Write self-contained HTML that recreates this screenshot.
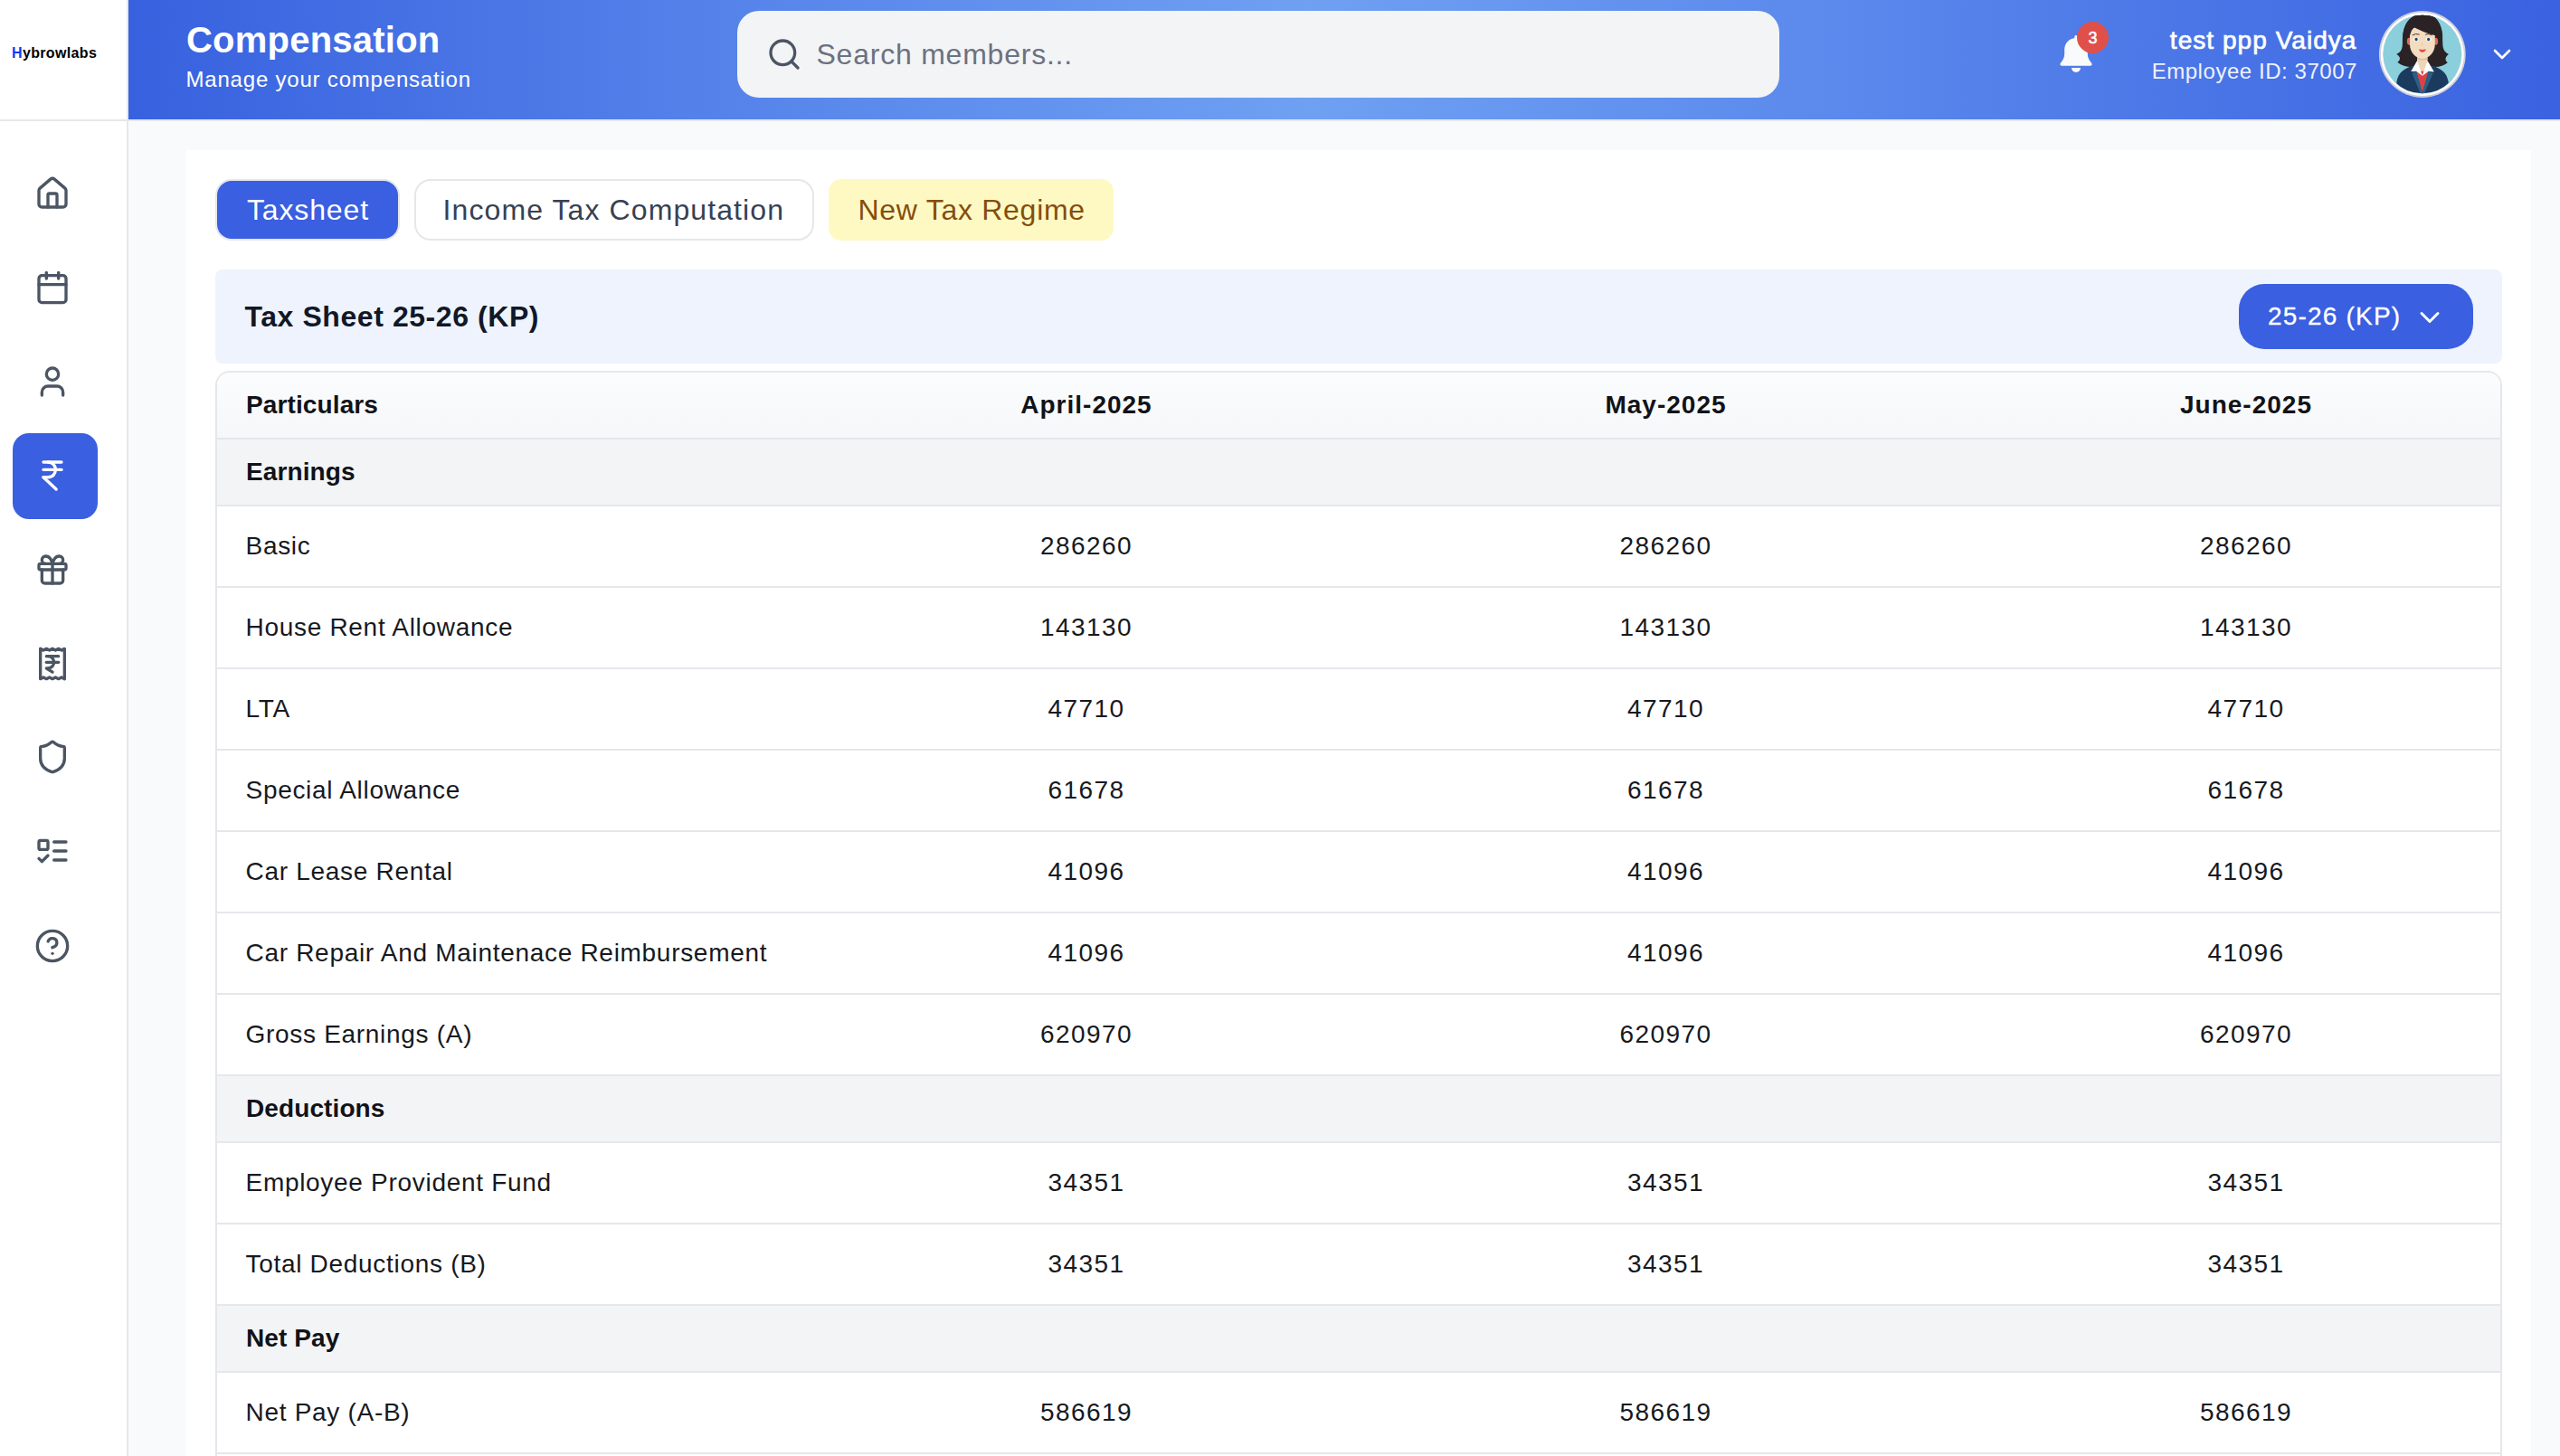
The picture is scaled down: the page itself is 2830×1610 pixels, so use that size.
<!DOCTYPE html>
<html><head><meta charset="utf-8">
<style>
*{box-sizing:border-box;margin:0;padding:0}
html,body{width:2830px;height:1610px;overflow:hidden;background:#f9fafb;font-family:"Liberation Sans",sans-serif;color:#111827}
.abs{position:absolute}
.t{position:absolute;white-space:nowrap}
</style></head><body>

<div class="abs" style="left:0;top:0;width:142px;height:1610px;background:#fff;border-right:2px solid #e5e7eb"></div>
<div class="abs" style="left:0;top:132px;width:142px;height:2px;background:#e5e7eb"></div>
<div class="t" style="left:13px;top:51.2px;font-size:16px;line-height:16px;font-weight:700;letter-spacing:0.35px;color:#000"><span style="color:#1a35f5">H</span>ybrowlabs</div>
<div class="abs" style="left:14px;top:479px;width:94px;height:95px;border-radius:18px;background:#3a5fe0"></div>
<svg class="abs" style="left:38px;top:194px" width="40" height="40" viewBox="0 0 24 24" fill="none" stroke="#4b5563" stroke-width="2" stroke-linecap="round" stroke-linejoin="round"><path d="M15 21v-8a1 1 0 0 0-1-1h-4a1 1 0 0 0-1 1v8"/><path d="M3 10a2 2 0 0 1 .709-1.528l7-5.999a2 2 0 0 1 2.582 0l7 5.999A2 2 0 0 1 21 10v9a2 2 0 0 1-2 2H5a2 2 0 0 1-2-2z"/></svg>
<svg class="abs" style="left:38px;top:298px" width="40" height="40" viewBox="0 0 24 24" fill="none" stroke="#4b5563" stroke-width="2" stroke-linecap="round" stroke-linejoin="round"><path d="M8 2v4"/><path d="M16 2v4"/><rect width="18" height="18" x="3" y="4" rx="2"/><path d="M3 10h18"/></svg>
<svg class="abs" style="left:38px;top:402px" width="40" height="40" viewBox="0 0 24 24" fill="none" stroke="#4b5563" stroke-width="2" stroke-linecap="round" stroke-linejoin="round"><path d="M19 21v-2a4 4 0 0 0-4-4H9a4 4 0 0 0-4 4v2"/><circle cx="12" cy="7" r="4"/></svg>
<svg class="abs" style="left:38px;top:506px" width="40" height="40" viewBox="0 0 24 24" fill="none" stroke="#ffffff" stroke-width="2" stroke-linecap="round" stroke-linejoin="round"><path d="M6 3h12"/><path d="M6 8h12"/><path d="m6 13 8.5 8"/><path d="M6 13h3"/><path d="M9 13c6.667 0 6.667-10 0-10"/></svg>
<svg class="abs" style="left:38px;top:610px" width="40" height="40" viewBox="0 0 24 24" fill="none" stroke="#4b5563" stroke-width="2" stroke-linecap="round" stroke-linejoin="round"><rect x="3" y="8" width="18" height="4" rx="1"/><path d="M12 8v13"/><path d="M19 12v7a2 2 0 0 1-2 2H7a2 2 0 0 1-2-2v-7"/><path d="M7.5 8a2.5 2.5 0 0 1 0-5A4.8 8 0 0 1 12 8a4.8 8 0 0 1 4.5-5 2.5 2.5 0 0 1 0 5"/></svg>
<svg class="abs" style="left:38px;top:714px" width="40" height="40" viewBox="0 0 24 24" fill="none" stroke="#4b5563" stroke-width="2" stroke-linecap="round" stroke-linejoin="round"><path d="M4 2v20l2-1 2 1 2-1 2 1 2-1 2 1 2-1 2 1V2l-2 1-2-1-2 1-2-1-2 1-2-1-2 1Z"/><path d="M8 7h8"/><path d="M12 17.5 8 15h1a4 4 0 0 0 0-8"/><path d="M8 11h8"/></svg>
<svg class="abs" style="left:38px;top:817px" width="40" height="40" viewBox="0 0 24 24" fill="none" stroke="#4b5563" stroke-width="2" stroke-linecap="round" stroke-linejoin="round"><path d="M20 13c0 5-3.5 7.5-7.66 8.95a1 1 0 0 1-.67-.01C7.5 20.5 4 18 4 13V6a1 1 0 0 1 1-1c2 0 4.5-1.2 6.24-2.72a1.17 1.17 0 0 1 1.52 0C14.51 3.81 17 5 19 5a1 1 0 0 1 1 1z"/></svg>
<svg class="abs" style="left:38px;top:921px" width="40" height="40" viewBox="0 0 24 24" fill="none" stroke="#4b5563" stroke-width="2" stroke-linecap="round" stroke-linejoin="round"><rect x="3" y="5" width="6" height="6" rx="1"/><path d="m3 17 2 2 4-4"/><path d="M13 6h8"/><path d="M13 12h8"/><path d="M13 18h8"/></svg>
<svg class="abs" style="left:38px;top:1026px" width="40" height="40" viewBox="0 0 24 24" fill="none" stroke="#4b5563" stroke-width="2" stroke-linecap="round" stroke-linejoin="round"><circle cx="12" cy="12" r="10"/><path d="M9.09 9a3 3 0 0 1 5.83 1c0 2-3 3-3 3"/><path d="M12 17h.01"/></svg>
<div class="abs" style="left:142px;top:0;width:2688px;height:132px;background:linear-gradient(90deg,#3861df 0%,#5886eb 27%,#6fa0f2 48.5%,#5a88ec 71%,#3a62e1 100%)"></div>
<div class="abs" style="left:142px;top:132px;width:2688px;height:2px;background:#e5e7eb"></div>
<div class="t" style="left:206px;top:24.2px;font-size:40px;line-height:40px;font-weight:700;letter-spacing:0.22px;color:#fff">Compensation</div>
<div class="t" style="left:205.5px;top:75.6px;font-size:24px;line-height:24px;letter-spacing:0.8px;color:#fff">Manage your compensation</div>
<div class="abs" style="left:815px;top:12px;width:1152px;height:96px;border-radius:24px;background:#f3f4f6"></div>
<svg class="abs" style="left:846.7px;top:39.7px" width="40" height="40" viewBox="0 0 24 24" fill="none" stroke="#4b5563" stroke-width="2" stroke-linecap="round" stroke-linejoin="round"><circle cx="11" cy="11" r="8"/><path d="m21 21-4.3-4.3"/></svg>
<div class="t" style="left:902.5px;top:44.3px;font-size:32px;line-height:32px;letter-spacing:0.77px;color:#6b7280">Search members...</div>
<svg class="abs" style="left:2277px;top:39px" width="36" height="42" viewBox="0 0 36 42"><g fill="#f9fafb"><rect x="16.3" y="0" width="3.4" height="5" rx="1.7"/><path d="M18 3C11 3 5.2 8 5.2 16.5L5.2 21C5.2 25 3.2 28 1 30.6C-0.1 31.9 0.5 33.8 2.2 33.8L33.8 33.8C35.5 33.8 36.1 31.9 35 30.6C32.8 28 30.8 25 30.8 21L30.8 16.5C30.8 8 25 3 18 3Z"/><path d="M13 36H23A5 5 0 0 1 13 36Z"/></g></svg>
<div class="abs" style="left:2296px;top:24px;width:35px;height:35px;border-radius:50%;background:#e0504a"></div>
<div class="t" style="left:2296px;width:35px;text-align:center;top:32.9px;font-size:18px;line-height:18px;-webkit-text-stroke:0.5px #fff;color:#fff">3</div>
<div class="t" style="right:224.5px;top:30.5px;font-size:28px;line-height:28px;letter-spacing:1.05px;-webkit-text-stroke:0.7px #fff;color:#fff">test ppp Vaidya</div>
<div class="t" style="right:224px;top:67.1px;font-size:24px;line-height:24px;letter-spacing:0.55px;color:#eef2fd">Employee ID: 37007</div>
<svg class="abs" style="left:2620px;top:5px" width="120" height="110" viewBox="0 0 1588 1456"><defs><clipPath id="av"><circle cx="765" cy="728" r="572"/></clipPath></defs>
<circle cx="765" cy="728" r="634" fill="#cdd0da"/>
<circle cx="765" cy="728" r="608" fill="#ffffff"/>
<circle cx="765" cy="728" r="580" fill="#dfe3ea"/>
<circle cx="765" cy="728" r="574" fill="#8bcfdc"/>
<g clip-path="url(#av)">
<path d="M790 132C690 132 600 175 545 255C490 335 475 430 475 540C475 640 470 690 385 728C450 760 450 810 400 845C470 905 560 925 650 905L890 905C980 925 1070 905 1135 850C1090 815 1095 770 1150 728C1075 690 1062 640 1062 540C1062 420 1045 320 995 245C945 170 880 132 790 132Z" fill="#2a2225"/>
<path d="M385 1200C385 1020 470 960 600 905L935 905C1065 960 1150 1020 1150 1200L1150 1460L385 1460Z" fill="#1a3a5e"/>
<path d="M495 1130L510 1460L490 1460Z" fill="#0f2a48"/>
<path d="M1035 1130L1025 1460L1045 1460Z" fill="#0f2a48"/>
<path d="M690 740L840 740L845 1010L685 1010Z" fill="#efd6b8"/>
<path d="M690 770Q765 810 840 770L840 800Q765 830 690 800Z" fill="#dcbd9c"/>
<ellipse cx="572" cy="540" rx="32" ry="52" fill="#df6b5c"/>
<ellipse cx="962" cy="540" rx="32" ry="52" fill="#df6b5c"/>
<path d="M582 430C582 360 640 325 765 325C890 325 950 360 950 430L950 580C950 705 860 792 765 792C670 792 582 705 582 580Z" fill="#f3dcc0"/>
<path d="M478 470L588 445C596 395 615 358 650 335C740 385 860 440 1000 462L1062 470C1062 420 1045 320 995 245C945 170 880 132 790 132C690 132 600 175 545 255C505 315 485 390 478 470Z" fill="#2a2225"/>
<path d="M622 447Q668 418 718 437" stroke="#3a2a26" stroke-width="12" fill="none" stroke-linecap="round"/>
<path d="M812 437Q858 420 902 447" stroke="#3a2a26" stroke-width="12" fill="none" stroke-linecap="round"/>
<ellipse cx="672" cy="508" rx="38" ry="26" fill="#ffffff"/><circle cx="676" cy="510" r="22" fill="#22476f"/>
<ellipse cx="860" cy="508" rx="38" ry="26" fill="#ffffff"/><circle cx="856" cy="510" r="22" fill="#22476f"/>
<path d="M765 560Q755 600 768 612" stroke="#e2c3a3" stroke-width="10" fill="none"/>
<path d="M712 660Q740 652 765 662Q790 652 822 660Q800 700 765 700Q732 700 712 660Z" fill="#e24a48"/>
<path d="M675 975L855 975L765 1310Z" fill="#d84445"/>
<path d="M598 980L688 825L768 1045L676 975Z" fill="#ffffff"/>
<path d="M938 985L842 825L762 1045L856 975Z" fill="#ffffff"/>
<path d="M612 1000L676 975L770 1300L735 1300Z" fill="#2b5f88"/>
<path d="M922 1005L856 975L760 1300L795 1300Z" fill="#2b5f88"/>
</g>
</svg>
<svg class="abs" style="left:2750px;top:43.9px" width="32" height="32" viewBox="0 0 24 24" fill="none" stroke="#ffffff" stroke-width="2" stroke-linecap="round" stroke-linejoin="round"><path d="m6 9 6 6 6-6"/></svg>
<div class="abs" style="left:206px;top:166px;width:2592px;height:1444px;background:#fff"></div>
<div class="abs" style="left:238px;top:198px;width:204px;height:68px;border:2px solid #e5e7eb;border-radius:18px;background:#3a5fe0"></div>
<div class="t" style="left:273px;top:216.1px;font-size:32px;line-height:32px;letter-spacing:0.85px;color:#fff">Taxsheet</div>
<div class="abs" style="left:458px;top:198px;width:442px;height:68px;border:2px solid #e5e7eb;border-radius:18px;background:#fff"></div>
<div class="t" style="left:489.5px;top:216.1px;font-size:32px;line-height:32px;letter-spacing:1.1px;color:#374151">Income Tax Computation</div>
<div class="abs" style="left:916px;top:198px;width:315px;height:68px;border-radius:14px;background:#fef9c3"></div>
<div class="t" style="left:948.5px;top:216.1px;font-size:32px;line-height:32px;letter-spacing:0.72px;color:#854d0e">New Tax Regime</div>
<div class="abs" style="left:238px;top:298px;width:2528px;height:104px;border-radius:8px;background:#eef3fd"></div>
<div class="t" style="left:270.5px;top:333.9px;font-size:32px;line-height:32px;font-weight:700;letter-spacing:0.57px;color:#111827">Tax Sheet 25-26 (KP)</div>
<div class="abs" style="left:2475px;top:314px;width:259px;height:72px;border-radius:28px;background:#3a5fe0"></div>
<div class="t" style="left:2507px;top:336.0px;font-size:28px;line-height:28px;letter-spacing:1.2px;-webkit-text-stroke:0.3px #fff;color:#fff">25-26 (KP)</div>
<svg class="abs" style="left:2668.3px;top:332.8px" width="36" height="36" viewBox="0 0 24 24" fill="none" stroke="#ffffff" stroke-width="2" stroke-linecap="round" stroke-linejoin="round"><path d="m6 9 6 6 6-6"/></svg>
<div class="abs" style="left:238px;top:410px;width:2528px;height:1300px;border:2px solid #e5e7eb;border-radius:16px;overflow:hidden;background:#fff">
<div class="abs" style="left:0px;top:0px;width:2526px;height:72px;background:linear-gradient(180deg,#fbfcfd,#f6f7f9)"></div>
<div class="t" style="left:32px;top:0px;height:72px;font-size:28px;line-height:72px;font-weight:700;letter-spacing:0.12px;color:#111318">Particulars</div>
<div class="t" style="left:661px;width:600px;text-align:center;top:0px;height:72px;font-size:28px;line-height:72px;font-weight:700;letter-spacing:1.0px;color:#111318">April-2025</div>
<div class="t" style="left:1301.5px;width:600px;text-align:center;top:0px;height:72px;font-size:28px;line-height:72px;font-weight:700;letter-spacing:1.0px;color:#111318">May-2025</div>
<div class="t" style="left:1943px;width:600px;text-align:center;top:0px;height:72px;font-size:28px;line-height:72px;font-weight:700;letter-spacing:1.0px;color:#111318">June-2025</div>
<div class="abs" style="left:0px;top:72px;width:2526px;height:2px;background:#e5e7eb"></div>
<div class="abs" style="left:0px;top:74px;width:2526px;height:72px;background:#f3f4f6"></div>
<div class="t" style="left:32px;top:74px;height:72px;font-size:28px;line-height:72px;font-weight:700;letter-spacing:0.1px;color:#111318">Earnings</div>
<div class="abs" style="left:0px;top:146px;width:2526px;height:2px;background:#e5e7eb"></div>
<div class="t" style="left:31.5px;top:148px;height:88px;font-size:28px;line-height:88px;font-weight:400;letter-spacing:0.7px;color:#17191e">Basic</div>
<div class="t" style="left:661px;width:600px;text-align:center;top:148px;height:88px;font-size:28px;line-height:88px;font-weight:400;letter-spacing:1.45px;color:#17191e">286260</div>
<div class="t" style="left:1301.5px;width:600px;text-align:center;top:148px;height:88px;font-size:28px;line-height:88px;font-weight:400;letter-spacing:1.45px;color:#17191e">286260</div>
<div class="t" style="left:1943px;width:600px;text-align:center;top:148px;height:88px;font-size:28px;line-height:88px;font-weight:400;letter-spacing:1.45px;color:#17191e">286260</div>
<div class="abs" style="left:0px;top:236px;width:2526px;height:2px;background:#e5e7eb"></div>
<div class="t" style="left:31.5px;top:238px;height:88px;font-size:28px;line-height:88px;font-weight:400;letter-spacing:0.7px;color:#17191e">House Rent Allowance</div>
<div class="t" style="left:661px;width:600px;text-align:center;top:238px;height:88px;font-size:28px;line-height:88px;font-weight:400;letter-spacing:1.45px;color:#17191e">143130</div>
<div class="t" style="left:1301.5px;width:600px;text-align:center;top:238px;height:88px;font-size:28px;line-height:88px;font-weight:400;letter-spacing:1.45px;color:#17191e">143130</div>
<div class="t" style="left:1943px;width:600px;text-align:center;top:238px;height:88px;font-size:28px;line-height:88px;font-weight:400;letter-spacing:1.45px;color:#17191e">143130</div>
<div class="abs" style="left:0px;top:326px;width:2526px;height:2px;background:#e5e7eb"></div>
<div class="t" style="left:31.5px;top:328px;height:88px;font-size:28px;line-height:88px;font-weight:400;letter-spacing:0.7px;color:#17191e">LTA</div>
<div class="t" style="left:661px;width:600px;text-align:center;top:328px;height:88px;font-size:28px;line-height:88px;font-weight:400;letter-spacing:1.45px;color:#17191e">47710</div>
<div class="t" style="left:1301.5px;width:600px;text-align:center;top:328px;height:88px;font-size:28px;line-height:88px;font-weight:400;letter-spacing:1.45px;color:#17191e">47710</div>
<div class="t" style="left:1943px;width:600px;text-align:center;top:328px;height:88px;font-size:28px;line-height:88px;font-weight:400;letter-spacing:1.45px;color:#17191e">47710</div>
<div class="abs" style="left:0px;top:416px;width:2526px;height:2px;background:#e5e7eb"></div>
<div class="t" style="left:31.5px;top:418px;height:88px;font-size:28px;line-height:88px;font-weight:400;letter-spacing:0.7px;color:#17191e">Special Allowance</div>
<div class="t" style="left:661px;width:600px;text-align:center;top:418px;height:88px;font-size:28px;line-height:88px;font-weight:400;letter-spacing:1.45px;color:#17191e">61678</div>
<div class="t" style="left:1301.5px;width:600px;text-align:center;top:418px;height:88px;font-size:28px;line-height:88px;font-weight:400;letter-spacing:1.45px;color:#17191e">61678</div>
<div class="t" style="left:1943px;width:600px;text-align:center;top:418px;height:88px;font-size:28px;line-height:88px;font-weight:400;letter-spacing:1.45px;color:#17191e">61678</div>
<div class="abs" style="left:0px;top:506px;width:2526px;height:2px;background:#e5e7eb"></div>
<div class="t" style="left:31.5px;top:508px;height:88px;font-size:28px;line-height:88px;font-weight:400;letter-spacing:0.7px;color:#17191e">Car Lease Rental</div>
<div class="t" style="left:661px;width:600px;text-align:center;top:508px;height:88px;font-size:28px;line-height:88px;font-weight:400;letter-spacing:1.45px;color:#17191e">41096</div>
<div class="t" style="left:1301.5px;width:600px;text-align:center;top:508px;height:88px;font-size:28px;line-height:88px;font-weight:400;letter-spacing:1.45px;color:#17191e">41096</div>
<div class="t" style="left:1943px;width:600px;text-align:center;top:508px;height:88px;font-size:28px;line-height:88px;font-weight:400;letter-spacing:1.45px;color:#17191e">41096</div>
<div class="abs" style="left:0px;top:596px;width:2526px;height:2px;background:#e5e7eb"></div>
<div class="t" style="left:31.5px;top:598px;height:88px;font-size:28px;line-height:88px;font-weight:400;letter-spacing:0.7px;color:#17191e">Car Repair And Maintenace Reimbursement</div>
<div class="t" style="left:661px;width:600px;text-align:center;top:598px;height:88px;font-size:28px;line-height:88px;font-weight:400;letter-spacing:1.45px;color:#17191e">41096</div>
<div class="t" style="left:1301.5px;width:600px;text-align:center;top:598px;height:88px;font-size:28px;line-height:88px;font-weight:400;letter-spacing:1.45px;color:#17191e">41096</div>
<div class="t" style="left:1943px;width:600px;text-align:center;top:598px;height:88px;font-size:28px;line-height:88px;font-weight:400;letter-spacing:1.45px;color:#17191e">41096</div>
<div class="abs" style="left:0px;top:686px;width:2526px;height:2px;background:#e5e7eb"></div>
<div class="t" style="left:31.5px;top:688px;height:88px;font-size:28px;line-height:88px;font-weight:400;letter-spacing:0.7px;color:#17191e">Gross Earnings (A)</div>
<div class="t" style="left:661px;width:600px;text-align:center;top:688px;height:88px;font-size:28px;line-height:88px;font-weight:400;letter-spacing:1.45px;color:#17191e">620970</div>
<div class="t" style="left:1301.5px;width:600px;text-align:center;top:688px;height:88px;font-size:28px;line-height:88px;font-weight:400;letter-spacing:1.45px;color:#17191e">620970</div>
<div class="t" style="left:1943px;width:600px;text-align:center;top:688px;height:88px;font-size:28px;line-height:88px;font-weight:400;letter-spacing:1.45px;color:#17191e">620970</div>
<div class="abs" style="left:0px;top:776px;width:2526px;height:2px;background:#e5e7eb"></div>
<div class="abs" style="left:0px;top:778px;width:2526px;height:72px;background:#f3f4f6"></div>
<div class="t" style="left:32px;top:778px;height:72px;font-size:28px;line-height:72px;font-weight:700;letter-spacing:0.1px;color:#111318">Deductions</div>
<div class="abs" style="left:0px;top:850px;width:2526px;height:2px;background:#e5e7eb"></div>
<div class="t" style="left:31.5px;top:852px;height:88px;font-size:28px;line-height:88px;font-weight:400;letter-spacing:0.7px;color:#17191e">Employee Provident Fund</div>
<div class="t" style="left:661px;width:600px;text-align:center;top:852px;height:88px;font-size:28px;line-height:88px;font-weight:400;letter-spacing:1.45px;color:#17191e">34351</div>
<div class="t" style="left:1301.5px;width:600px;text-align:center;top:852px;height:88px;font-size:28px;line-height:88px;font-weight:400;letter-spacing:1.45px;color:#17191e">34351</div>
<div class="t" style="left:1943px;width:600px;text-align:center;top:852px;height:88px;font-size:28px;line-height:88px;font-weight:400;letter-spacing:1.45px;color:#17191e">34351</div>
<div class="abs" style="left:0px;top:940px;width:2526px;height:2px;background:#e5e7eb"></div>
<div class="t" style="left:31.5px;top:942px;height:88px;font-size:28px;line-height:88px;font-weight:400;letter-spacing:0.7px;color:#17191e">Total Deductions (B)</div>
<div class="t" style="left:661px;width:600px;text-align:center;top:942px;height:88px;font-size:28px;line-height:88px;font-weight:400;letter-spacing:1.45px;color:#17191e">34351</div>
<div class="t" style="left:1301.5px;width:600px;text-align:center;top:942px;height:88px;font-size:28px;line-height:88px;font-weight:400;letter-spacing:1.45px;color:#17191e">34351</div>
<div class="t" style="left:1943px;width:600px;text-align:center;top:942px;height:88px;font-size:28px;line-height:88px;font-weight:400;letter-spacing:1.45px;color:#17191e">34351</div>
<div class="abs" style="left:0px;top:1030px;width:2526px;height:2px;background:#e5e7eb"></div>
<div class="abs" style="left:0px;top:1032px;width:2526px;height:72px;background:#f3f4f6"></div>
<div class="t" style="left:32px;top:1032px;height:72px;font-size:28px;line-height:72px;font-weight:700;letter-spacing:0.1px;color:#111318">Net Pay</div>
<div class="abs" style="left:0px;top:1104px;width:2526px;height:2px;background:#e5e7eb"></div>
<div class="t" style="left:31.5px;top:1106px;height:88px;font-size:28px;line-height:88px;font-weight:400;letter-spacing:0.7px;color:#17191e">Net Pay (A-B)</div>
<div class="t" style="left:661px;width:600px;text-align:center;top:1106px;height:88px;font-size:28px;line-height:88px;font-weight:400;letter-spacing:1.45px;color:#17191e">586619</div>
<div class="t" style="left:1301.5px;width:600px;text-align:center;top:1106px;height:88px;font-size:28px;line-height:88px;font-weight:400;letter-spacing:1.45px;color:#17191e">586619</div>
<div class="t" style="left:1943px;width:600px;text-align:center;top:1106px;height:88px;font-size:28px;line-height:88px;font-weight:400;letter-spacing:1.45px;color:#17191e">586619</div>
<div class="abs" style="left:0px;top:1194px;width:2526px;height:2px;background:#e5e7eb"></div>
</div>
</body></html>
